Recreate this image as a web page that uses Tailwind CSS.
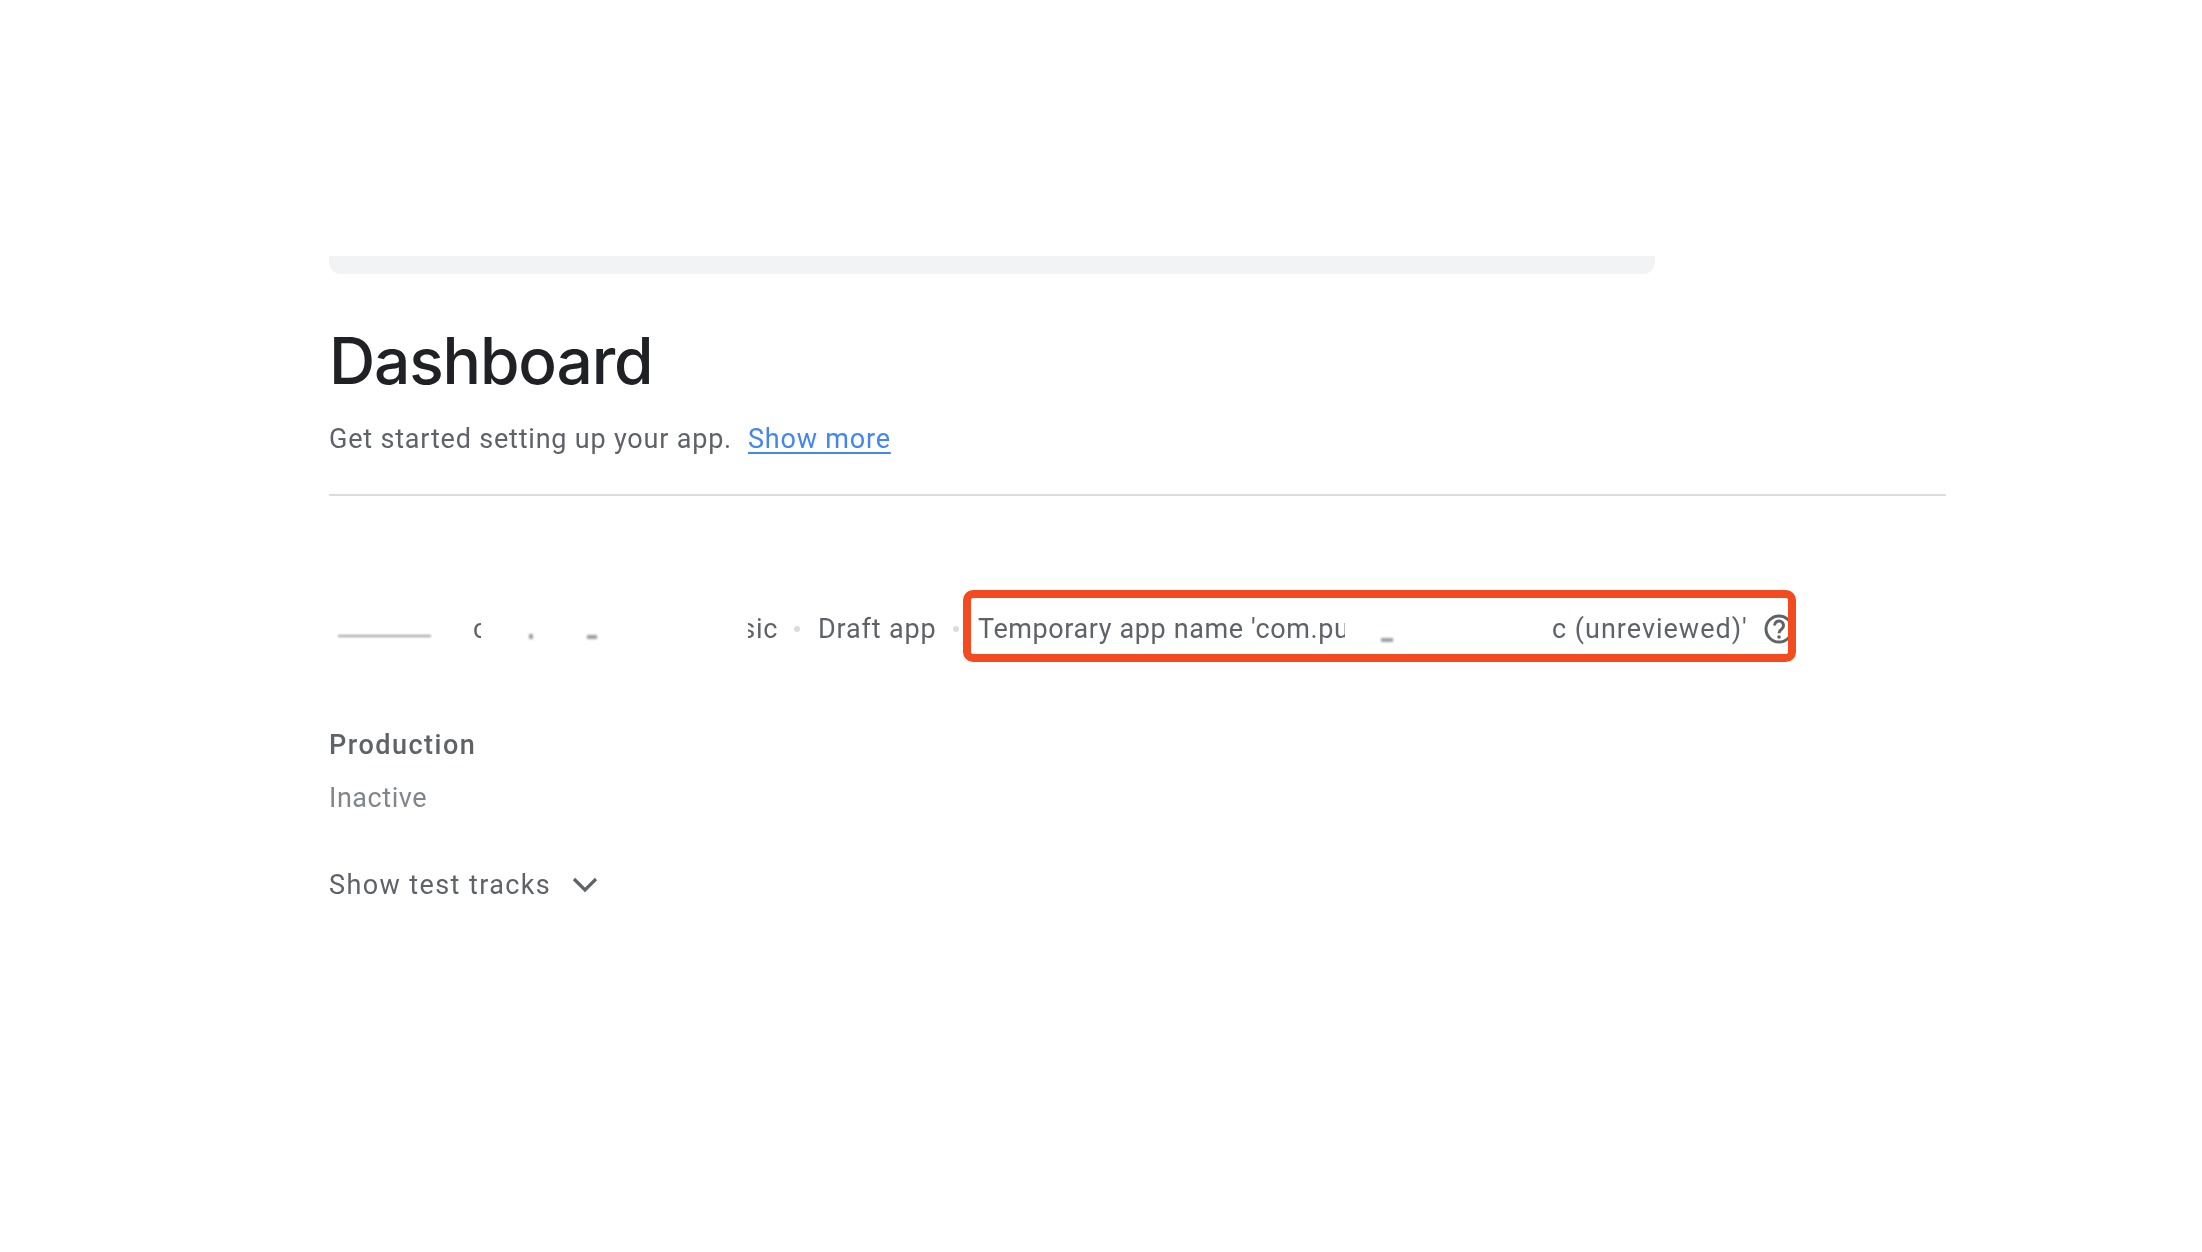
<!DOCTYPE html>
<html lang="en">
<head>
<meta charset="utf-8">
<script src="https://cdn.jsdelivr.net/npm/@tailwindcss/browser@4"></script>
<title>Dashboard</title>
</head>
<body class="bg-white">
<div class="w-[2202px] h-[1252px] overflow-hidden bg-white pt-[256px] pl-[329px] font-['Roboto',sans-serif]">
  <div class="w-[1326px] h-[18px] bg-[#f1f3f4] rounded-b-[12px]"></div>

  <h1 class="mt-[47px] h-[80px] flex items-center text-[64px] leading-none font-medium text-[#202124] font-['Inter',sans-serif] tracking-[-1.15px] blur-[0.6px]">Dashboard</h1>

  <p class="mt-[20px] h-[36px] flex items-center text-[27px] text-[#5f6368] tracking-[0.8px] blur-[0.7px]">
    <span>Get started setting up your app.</span>
    <a class="ml-[16px] text-[#4285f4] underline underline-offset-4">Show more</a>
  </p>

  <div class="mt-[37px] w-[1617px] h-[2px] bg-[#dadce0]"></div>

  <div class="mt-[93px] h-[74px] flex items-center text-[27px] text-[#5f6368] tracking-[0.7px]">
    <div class="ml-[9px] w-[93px] h-[2px] mt-[20px] mr-[42px] bg-[#9aa0a6] blur-[0.8px]"></div>
    <span class="w-[8px] mt-[7px] mr-[48px] overflow-hidden blur-[0.7px]">c</span>
    <span class="w-[4px] h-[5px] mt-[20px] mr-[54px] bg-[#9aa0a6] blur-[1px]"></span>
    <span class="w-[10px] h-[4px] mt-[22px] mr-[151px] bg-[#9aa0a6] blur-[1px]"></span>
    <span class="w-[30px] mt-[7px] flex justify-end overflow-hidden whitespace-nowrap blur-[0.7px]">sic</span>
    <span class="ml-[16px] mt-[5px] w-[6px] h-[6px] rounded-full bg-[#dadce0]"></span>
    <span class="ml-[18px] mt-[7px] w-[118px] whitespace-nowrap tracking-[0.85px] blur-[0.7px]">Draft app</span>
    <span class="ml-[17px] mt-[5px] w-[6px] h-[6px] rounded-full bg-[#dadce0]"></span>
    <div class="ml-[4px] w-[833px] h-[72px] border-[8px] border-[#f34a20] rounded-[10px] bg-white flex items-center pl-[7px] overflow-hidden">
      <span class="w-[367px] shrink-0 mt-[7px] overflow-hidden whitespace-nowrap tracking-[0.6px] blur-[0.7px]">Temporary app name 'com.pu</span>
      <span class="ml-[36px] mr-[159px] w-[12px] h-[4px] mt-[28px] bg-[#9aa0a6] blur-[1px] shrink-0"></span>
      <span class="mt-[7px] shrink-0 whitespace-nowrap tracking-[1px] blur-[0.7px]">c (unreviewed)'</span>
      <svg class="ml-[15px] mt-[5px] shrink-0 blur-[0.6px]" width="32" height="32" viewBox="0 0 32 32" fill="none">
        <circle cx="16" cy="16" r="13" stroke="#5f6368" stroke-width="3"/>
        <path d="M11.5 12.5a4.5 4.5 0 1 1 7 3.7c-1.6 1.1-2.5 2-2.5 4" stroke="#5f6368" stroke-width="3"/>
        <circle cx="16" cy="24" r="1.8" fill="#5f6368"/>
      </svg>
    </div>
  </div>

  <div class="mt-[64px] h-[36px] flex items-center text-[27px] font-medium text-[#5f6368] tracking-[1.5px] blur-[0.7px]">Production</div>
  <div class="mt-[17px] h-[36px] flex items-center text-[27px] text-[#80868b] tracking-[0.55px] blur-[0.7px]">Inactive</div>
  <div class="mt-[51px] h-[36px] flex items-center text-[27px] text-[#5f6368] tracking-[1.4px] blur-[0.7px]">
    <span>Show test tracks</span>
    <svg class="ml-[20px]" width="28" height="20" viewBox="0 0 28 20" fill="none"><path d="M3 4l11 11L25 4" stroke="#5f6368" stroke-width="3.2"/></svg>
  </div>
</div>
</body>
</html>
